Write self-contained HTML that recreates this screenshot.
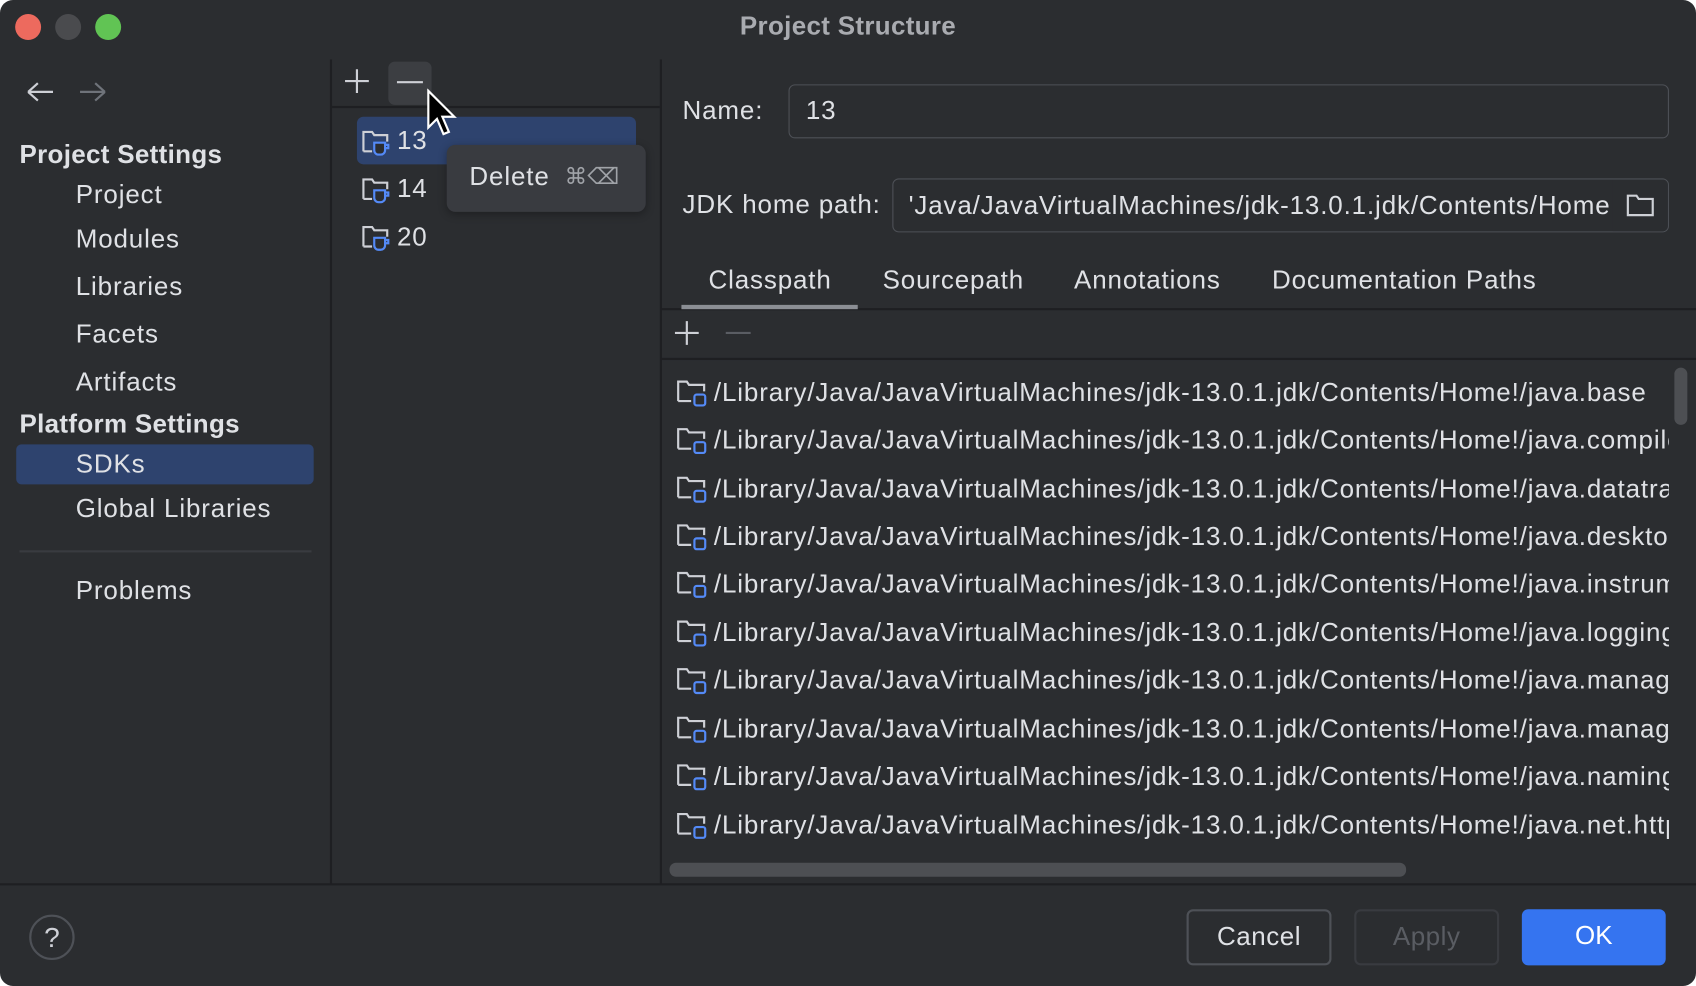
<!DOCTYPE html>
<html><head><meta charset="utf-8"><style>
html,body{margin:0;padding:0;background:#fff;width:1696px;height:986px;overflow:hidden}
#s{position:absolute;left:0;top:0;width:1568px;height:912px;transform:scale(1.08163,1.0811);transform-origin:0 0}
#w{position:absolute;left:0;top:0;width:1568px;height:912px;background:#2b2d30;border-radius:12px;overflow:hidden;font-family:"Liberation Sans",sans-serif;color:#dfe1e5}
.a{position:absolute;white-space:nowrap}
.t{font-size:24px;line-height:28px;letter-spacing:0.8px}
.b{font-weight:bold;letter-spacing:0.3px}
.ln{position:absolute;background:#1e1f22}
</style></head><body><div id="s"><div id="w">
<div class="a" style="left:14px;top:13px;width:24px;height:24px;border-radius:50%;background:#ed6a5e"></div>
<div class="a" style="left:51px;top:13px;width:24px;height:24px;border-radius:50%;background:#4a4b4e"></div>
<div class="a" style="left:88px;top:13px;width:24px;height:24px;border-radius:50%;background:#61c454"></div>
<div class="a b" style="left:0;width:1568px;text-align:center;top:11px;font-size:24px;color:#a9abb0">Project Structure</div>

<svg class="a" style="left:24px;top:74px" width="75" height="22"><path d="M2 11H25M2 11L11 3M2 11L11 19" stroke="#ced0d6" stroke-width="2" fill="none"/><path d="M50 11H73M73 11L64 3M73 11L64 19" stroke="#6f737a" stroke-width="2" fill="none"/></svg>

<div class="a t b" style="left:18px;top:130px;font-size:24px">Project Settings</div>
<div class="a t" style="left:70px;top:167px">Project</div>
<div class="a t" style="left:70px;top:208px">Modules</div>
<div class="a t" style="left:70px;top:252px">Libraries</div>
<div class="a t" style="left:70px;top:296px">Facets</div>
<div class="a t" style="left:70px;top:340px">Artifacts</div>
<div class="a t b" style="left:18px;top:379px;font-size:24px">Platform Settings</div>
<div class="a" style="left:15px;top:411px;width:275px;height:37px;background:#2e436e;border-radius:5px"></div>
<div class="a t" style="left:70px;top:416px">SDKs</div>
<div class="a t" style="left:70px;top:457px">Global Libraries</div>
<div class="a" style="left:18px;top:509px;width:270px;height:2px;background:#393b40"></div>
<div class="a t" style="left:70px;top:533px">Problems</div>

<div class="ln" style="left:305px;top:55px;width:2px;height:763px"></div>
<div class="ln" style="left:610px;top:55px;width:2px;height:763px"></div>
<div class="ln" style="left:307px;top:98px;width:303px;height:2px"></div>
<svg class="a" style="left:318px;top:63px" width="24" height="24"><path d="M12 1V23M1 12H23" stroke="#ced0d6" stroke-width="2"/></svg>
<div class="a" style="left:359px;top:57px;width:40px;height:40px;background:#3c3e42;border-radius:6px"></div>
<svg class="a" style="left:366px;top:74px" width="26" height="4"><path d="M1 2H25" stroke="#ced0d6" stroke-width="2"/></svg>
<div class="a" style="left:330px;top:108px;width:258px;height:44px;background:#2e436e;border-radius:6px"></div>
<svg width="0" height="0" style="position:absolute"><defs><g id="jf"><path d="M2 22V4H10L12 7H24V13" stroke="#ced0d6" stroke-width="2" fill="none"/><path d="M2 22H10" stroke="#ced0d6" stroke-width="2"/><path d="M12 14H22V21A4 4 0 0 1 18 25H16A4 4 0 0 1 12 21Z M22 16H25V19H22" stroke="#548af7" stroke-width="2" fill="#2b2d30"/></g></defs></svg>
<svg class="a" style="left:334px;top:118px" width="30" height="28"><use href="#jf"/></svg>
<svg class="a" style="left:334px;top:162px" width="30" height="28"><use href="#jf"/></svg>
<svg class="a" style="left:334px;top:206px" width="30" height="28"><use href="#jf"/></svg>
<div class="a t" style="left:367px;top:117px">13</div>
<div class="a t" style="left:367px;top:161px">14</div>
<div class="a t" style="left:367px;top:206px">20</div>
<div class="a" style="left:413px;top:134px;width:184px;height:62px;background:#393b40;border-radius:8px;box-shadow:0 2px 8px rgba(0,0,0,.3)"></div>
<div class="a t" style="left:434px;top:150px">Delete</div>
<div class="a t" style="left:522px;top:150px;color:#a0a3a8;font-size:21px;letter-spacing:0">⌘⌫</div>
<svg class="a" style="left:394px;top:82px" width="30" height="46"><path d="M2 2V36L10 28L16 42L21 40L15 26H26Z" fill="#000" stroke="#fff" stroke-width="2"/></svg>

<div class="a t" style="left:631px;top:89px">Name:</div>
<div class="a" style="left:729px;top:78px;width:812px;height:48px;border:1px solid #4e5157;border-radius:6px"></div>
<div class="a t" style="left:745px;top:89px">13</div>
<div class="a t" style="left:631px;top:176px">JDK home path:</div>
<div class="a" style="left:825px;top:165px;width:716px;height:48px;border:1px solid #4e5157;border-radius:6px;overflow:hidden"><div class="a t" style="left:14px;top:11px">'Java/JavaVirtualMachines/jdk-13.0.1.jdk/Contents/Home</div><div class="a" style="left:665px;top:0;width:51px;height:48px;background:#2b2d30"></div></div>
<svg class="a" style="left:1503px;top:178px" width="28" height="24"><path d="M2 21V3H10L12 6H25V21Z" stroke="#ced0d6" stroke-width="2" fill="none"/></svg>

<div class="a t" style="left:655px;top:246px">Classpath</div>
<div class="a t" style="left:816px;top:246px">Sourcepath</div>
<div class="a t" style="left:993px;top:246px">Annotations</div>
<div class="a t" style="left:1176px;top:246px">Documentation Paths</div>
<div class="ln" style="left:612px;top:285px;width:956px;height:2px"></div>
<div class="a" style="left:630px;top:282px;width:163px;height:4px;background:#8b8e94"></div>
<svg class="a" style="left:623px;top:296px" width="72" height="24"><path d="M12 1V23M1 12H23" stroke="#ced0d6" stroke-width="2"/><path d="M48 12H71" stroke="#5a5d63" stroke-width="2"/></svg>
<div class="ln" style="left:612px;top:331px;width:956px;height:2px"></div>

<div class="a" style="left:612px;top:333px;width:931px;height:460px;overflow:hidden">
<svg width="0" height="0" style="position:absolute"><defs><g id="lf"><path d="M2 22V4H10L12 7H26V13" stroke="#ced0d6" stroke-width="2" fill="none"/><path d="M2 22H14" stroke="#ced0d6" stroke-width="2"/><rect x="17" y="16" width="10" height="10" rx="2" stroke="#548af7" stroke-width="2" fill="#2b2d30"/></g></defs></svg>
<div class="a" style="left:13px;top:16px"><svg width="30" height="28"><use href="#lf"/></svg></div><div class="a t" style="left:48px;top:17px">/Library/Java/JavaVirtualMachines/jdk-13.0.1.jdk/Contents/Home!/java.base</div>
<div class="a" style="left:13px;top:60px"><svg width="30" height="28"><use href="#lf"/></svg></div><div class="a t" style="left:48px;top:61px">/Library/Java/JavaVirtualMachines/jdk-13.0.1.jdk/Contents/Home!/java.compiler</div>
<div class="a" style="left:13px;top:105px"><svg width="30" height="28"><use href="#lf"/></svg></div><div class="a t" style="left:48px;top:106px">/Library/Java/JavaVirtualMachines/jdk-13.0.1.jdk/Contents/Home!/java.datatransfer</div>
<div class="a" style="left:13px;top:149px"><svg width="30" height="28"><use href="#lf"/></svg></div><div class="a t" style="left:48px;top:150px">/Library/Java/JavaVirtualMachines/jdk-13.0.1.jdk/Contents/Home!/java.desktop</div>
<div class="a" style="left:13px;top:193px"><svg width="30" height="28"><use href="#lf"/></svg></div><div class="a t" style="left:48px;top:194px">/Library/Java/JavaVirtualMachines/jdk-13.0.1.jdk/Contents/Home!/java.instrument</div>
<div class="a" style="left:13px;top:238px"><svg width="30" height="28"><use href="#lf"/></svg></div><div class="a t" style="left:48px;top:239px">/Library/Java/JavaVirtualMachines/jdk-13.0.1.jdk/Contents/Home!/java.logging</div>
<div class="a" style="left:13px;top:282px"><svg width="30" height="28"><use href="#lf"/></svg></div><div class="a t" style="left:48px;top:283px">/Library/Java/JavaVirtualMachines/jdk-13.0.1.jdk/Contents/Home!/java.management</div>
<div class="a" style="left:13px;top:327px"><svg width="30" height="28"><use href="#lf"/></svg></div><div class="a t" style="left:48px;top:328px">/Library/Java/JavaVirtualMachines/jdk-13.0.1.jdk/Contents/Home!/java.management.rmi</div>
<div class="a" style="left:13px;top:371px"><svg width="30" height="28"><use href="#lf"/></svg></div><div class="a t" style="left:48px;top:372px">/Library/Java/JavaVirtualMachines/jdk-13.0.1.jdk/Contents/Home!/java.naming</div>
<div class="a" style="left:13px;top:416px"><svg width="30" height="28"><use href="#lf"/></svg></div><div class="a t" style="left:48px;top:417px">/Library/Java/JavaVirtualMachines/jdk-13.0.1.jdk/Contents/Home!/java.net.http</div>
</div>
<div class="a" style="left:1548px;top:340px;width:12px;height:53px;background:#4d4f53;border-radius:6px"></div>
<div class="a" style="left:619px;top:798px;width:681px;height:13px;background:#4d4f53;border-radius:6px"></div>

<div class="ln" style="left:0;top:817px;width:1568px;height:2px"></div>
<div class="a" style="left:27px;top:846px;width:38px;height:38px;border:2px solid #4e5157;border-radius:50%;text-align:center;font-size:26px;line-height:38px;color:#ced0d6">?</div>
<div class="a" style="left:1097px;top:841px;width:130px;height:48px;border:2px solid #4e5157;border-radius:6px;text-align:center;line-height:48px;font-size:24px;letter-spacing:0.5px">Cancel</div>
<div class="a" style="left:1252px;top:841px;width:130px;height:48px;border:2px solid #393b40;border-radius:6px;text-align:center;line-height:48px;font-size:24px;color:#5a5d63;letter-spacing:0.5px">Apply</div>
<div class="a" style="left:1407px;top:841px;width:133px;height:52px;background:#3574f0;border-radius:6px;text-align:center;line-height:50px;font-size:24px;color:#fff">OK</div>
</div></div></body></html>
